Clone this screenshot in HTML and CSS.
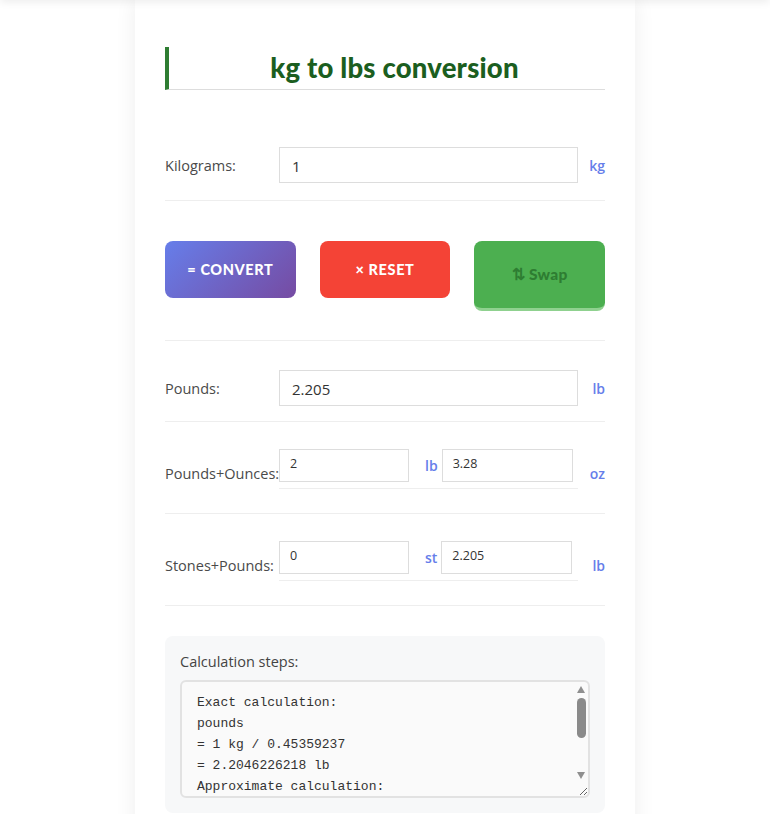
FILE: index.html
```html
<!DOCTYPE html>
<html>
  <head>
    <title>kg to lbs conversion</title>
    <meta charset="utf-8">
    <link rel="stylesheet" href="styles.css">
  </head>
  <body>
    <div class="topbar"></div>
    <div class="card">
      <h1 class="title">kg to lbs conversion</h1>

      <div class="row">
        <label class="label" for="kg">Kilograms:</label>
        <input class="field" id="kg" type="text" value="1">
        <span class="unit">kg</span>
      </div>

      <div class="buttons">
        <button class="btn btn-convert">= CONVERT</button>
        <button class="btn btn-reset">× RESET</button>
        <button class="btn btn-swap">⇅ Swap</button>
      </div>

      <div class="row">
        <label class="label" for="lb">Pounds:</label>
        <input class="field" id="lb" type="text" value="2.205">
        <span class="unit">lb</span>
      </div>

      <div class="row row-pair">
        <label class="label">Pounds+Ounces:</label>
        <div class="pair">
          <input class="small" type="text" value="2">
          <span class="unit">lb</span>
          <input class="small" type="text" value="3.28">
        </div>
        <span class="unit">oz</span>
      </div>

      <div class="row row-pair">
        <label class="label">Stones+Pounds:</label>
        <div class="pair">
          <input class="small" type="text" value="0">
          <span class="unit">st</span>
          <input class="small" type="text" value="2.205">
        </div>
        <span class="unit">lb</span>
      </div>

      <div class="steps">
        <div class="steps-label">Calculation steps:</div>
        <div class="steps-box">
          <textarea class="steps-text" readonly>Exact calculation:
pounds
= 1 kg / 0.45359237
= 2.2046226218 lb
Approximate calculation:
pounds
= 1 kg × 2.20462
= 2.205 lb</textarea>
          <!-- drawn scrollbar, the headless browser hides the real one -->
          <div class="scrollbar">
            <span class="arrow arrow-up"></span>
            <span class="thumb"></span>
            <span class="arrow arrow-down"></span>
          </div>
        </div>
      </div>
    </div>
  </body>
</html>
```

FILE: styles.css
```css
body {
  margin: 0;
  background: #fff;
  font-family: "Open Sans", "Noto Sans", sans-serif;
  color: #444;
}

.topbar {
  position: fixed;
  top: -10px;
  left: 0;
  right: 0;
  height: 10px;
  box-shadow: 0 2px 8px rgba(0, 0, 0, 0.08);
}

.card {
  width: 440px;
  margin: 0 auto;
  padding: 47px 30px 20px;
  background: #fff;
  box-shadow: 0 0 20px rgba(0, 0, 0, 0.07);
  min-height: 800px;
}

.title {
  margin: 0 0 43px;
  padding: 5px 0 5px 15px;
  border-left: 4px solid #2e7d32;
  border-bottom: 1px solid #ddd;
  text-align: center;
  font-family: Lato, sans-serif;
  font-weight: 900;
  font-size: 27.5px;
  line-height: 32px;
  letter-spacing: 0.2px;
  color: #1b5e20;
}

.row {
  display: flex;
  align-items: center;
  margin-top: 14px;
  padding: 15px 0;
  border-bottom: 1px solid #eee;
}

.title + .row {
  margin-top: 0;
  padding: 14px 0 17px;
}

.label {
  width: 114px;
  flex: none;
  font-size: 14.5px;
  color: #4a4a4a;
}

.field {
  width: 299px;
  height: 36px;
  box-sizing: border-box;
  border: 1px solid #ddd;
  padding: 2px 12px 0;
  font-family: "Open Sans", sans-serif;
  font-size: 15px;
  color: #333;
  outline: none;
}

.unit {
  margin-left: auto;
  font-size: 14px;
  font-weight: 600;
  color: #667eea;
}

.row-pair {
  padding: 13px 0 15px;
}

.pair {
  display: flex;
  align-items: center;
  width: 299px;
  padding-bottom: 6px;
  border-bottom: 1px solid #eee;
  margin-bottom: 9px;
}

.pair .unit {
  margin: 0 4px 0 16px;
}

.small {
  width: 131px;
  height: 33px;
  box-sizing: border-box;
  border: 1px solid #ddd;
  padding: 0 10px 4px;
  font-family: "Open Sans", sans-serif;
  font-size: 12.5px;
  color: #333;
  outline: none;
}

.pair .small:first-child {
  width: 130px;
}

.buttons {
  display: grid;
  grid-template-columns: repeat(3, 1fr);
  gap: 24px;
  align-items: start;
  padding: 40px 0 29px;
  border-bottom: 1px solid #eee;
}

.btn {
  height: 57px;
  border: none;
  border-radius: 8px;
  font-family: Lato, sans-serif;
  font-weight: 900;
  font-size: 14.5px;
  letter-spacing: 0.6px;
  color: #fff;
}

.btn-convert {
  background: linear-gradient(135deg, #667eea, #764ba2);
}

.btn-reset {
  background: #f44336;
}

.btn-swap {
  height: 70px;
  background: #4caf50;
  border-bottom: 3px solid #8fd18f;
  color: #2e7d32;
  font-size: 15.5px;
  letter-spacing: 0.3px;
}

.steps {
  margin-top: 30px;
  padding: 15px;
  background: #f7f8f9;
  border-radius: 8px;
}

.steps-label {
  font-size: 14.5px;
  line-height: 22px;
  color: #444;
  margin-bottom: 7px;
}

.steps-box {
  position: relative;
}

.steps-text {
  display: block;
  width: 100%;
  height: 118px;
  box-sizing: border-box;
  padding: 10px 15px;
  border: 2px solid #e2e2e2;
  border-radius: 6px;
  background: #fafafa;
  font-family: "Liberation Mono", monospace;
  font-size: 13px;
  line-height: 21px;
  color: #333;
  resize: vertical;
  overflow: hidden;
}

.scrollbar {
  position: absolute;
  top: 2px;
  right: 2px;
  bottom: 17px;
  width: 14px;
  display: flex;
  flex-direction: column;
  align-items: center;
}

.arrow {
  width: 0;
  height: 0;
  border-left: 4.5px solid transparent;
  border-right: 4.5px solid transparent;
}

.arrow-up {
  margin-top: 4px;
  border-bottom: 7px solid #8f8f8f;
}

.arrow-down {
  margin-top: auto;
  margin-bottom: 2px;
  border-top: 7px solid #8f8f8f;
}

.thumb {
  width: 9px;
  height: 40px;
  margin-top: 5px;
  border-radius: 5px;
  background: #8a8a8a;
}
```
